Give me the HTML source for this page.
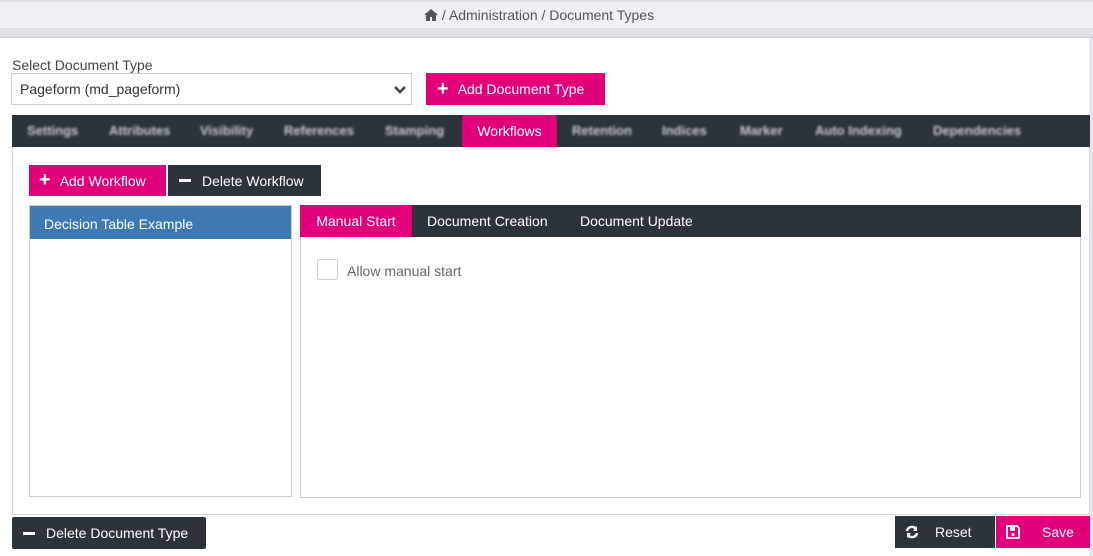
<!DOCTYPE html>
<html><head><style>
*{box-sizing:border-box;margin:0;padding:0}
body{width:1093px;height:556px;background:#fff;font-family:"Liberation Sans",sans-serif;font-size:14px;color:#333;position:relative;overflow:hidden}
.a{position:absolute}
.btn{position:absolute;color:#fff;font-size:14px;display:flex;align-items:center;white-space:nowrap}
.pink{background:#e2007a}
.dark{background:#2c333b}
.tabs span{display:inline-block;position:absolute;top:0;height:32px;line-height:32px;color:#c9ccd0;filter:blur(1.2px);font-size:13px;font-weight:bold}
</style></head><body>
<div class="a" style="left:0;top:0;width:1093px;height:28px;background:#eef1f5;border-top:2px solid #dcdfe3"></div>
<div class="a" style="left:0;top:28px;width:1093px;height:10px;background:#dde2e9;border-bottom:1px solid #c8ced6"></div>
<div class="a" style="left:424px;top:7px;font-size:14px;color:#555">
<svg width="14" height="12" viewBox="0 0 14 12" style="vertical-align:-1px"><path d="M7 0L0 6h2v6h4V8h2v4h4V6h2z" fill="#555"/></svg> / Administration / Document Types</div>
<div class="a" style="left:1089px;top:38px;width:4px;height:518px;background:#e3e6ec"></div>
<div class="a" style="left:12px;top:57px;font-size:14px;color:#444">Select Document Type</div>
<div class="a" style="left:11px;top:73px;width:401px;height:32px;border:1px solid #ccc;padding:7px 8px;color:#333">Pageform (md_pageform)
<svg class="a" style="right:4px;top:11px" width="14" height="10" viewBox="0 0 14 10"><path d="M2 2l5 5 5-5" stroke="#444" stroke-width="2.6" fill="none"/></svg></div>
<div class="btn pink" style="left:426px;top:73px;width:179px;height:32px;padding-left:11px"><b style="font-size:20px;margin-right:9px">+</b>Add Document Type</div>
<div class="a dark tabs" style="left:12px;top:115px;width:1078px;height:32px">
<span style="left:15px">Settings</span><span style="left:97px">Attributes</span><span style="left:188px">Visibility</span><span style="left:272px">References</span><span style="left:373px">Stamping</span>
<span style="left:450px;width:95px;background:#e2007a;color:#fff;filter:none;font-weight:normal;font-size:14px;text-align:center">Workflows</span>
<span style="left:560px">Retention</span><span style="left:650px">Indices</span><span style="left:728px">Marker</span><span style="left:803px">Auto Indexing</span><span style="left:921px">Dependencies</span></div>
<div class="a" style="left:12px;top:147px;width:1078px;height:368px;border:1px solid #d5d8dd;border-top:none"></div>
<div class="btn pink" style="left:29px;top:165px;width:137px;height:31px;padding-left:10px"><b style="font-size:20px;margin-right:9px">+</b>Add Workflow</div>
<div class="btn dark" style="left:168px;top:165px;width:153px;height:31px;padding-left:11px"><span style="display:inline-block;width:12px;height:3px;background:#fff;margin-right:11px"></span>Delete Workflow</div>
<div class="a" style="left:29px;top:205px;width:263px;height:292px;border:1px solid #ccc"></div>
<div class="a" style="left:30px;top:206px;width:261px;height:33px;background:#3e79b1;color:#fff;padding:10px 14px;font-size:14px">Decision Table Example</div>
<div class="a" style="left:300px;top:205px;width:781px;height:293px;border:1px solid #ccc"></div>
<div class="a dark" style="left:300px;top:205px;width:781px;height:32px;color:#fff">
<div class="a pink" style="left:0;top:0;width:112px;height:32px;line-height:32px;text-align:center">Manual Start</div>
<div class="a" style="left:127px;top:0;line-height:32px">Document Creation</div>
<div class="a" style="left:280px;top:0;line-height:32px">Document Update</div></div>
<div class="a" style="left:317px;top:259px;width:21px;height:21px;border:1px solid #ccc;border-radius:2px"></div>
<div class="a" style="left:347px;top:263px;color:#666">Allow manual start</div>
<div class="btn dark" style="left:12px;top:517px;width:194px;height:32px;padding-left:11px;border-radius:2px"><span style="display:inline-block;width:12px;height:3px;background:#fff;margin-right:11px"></span>Delete Document Type</div>
<div class="btn dark" style="left:895px;top:516px;width:100px;height:32px;padding-left:10px">
<svg width="14" height="14" viewBox="0 0 14 14" style="margin-right:16px"><path d="M2 6a5 5 0 0 1 9-2M12 8a5 5 0 0 1-9 2" stroke="#fff" stroke-width="2.4" fill="none"/><path d="M12 1v5H8zM2 13V8h4z" fill="#fff"/></svg>Reset</div>
<div class="btn pink" style="left:996px;top:516px;width:94px;height:32px;padding-left:10px">
<svg width="14" height="14" viewBox="0 0 14 14" style="margin-right:22px"><path d="M1 1h10l2 2v10H1z" stroke="#fff" stroke-width="1.8" fill="none"/><rect x="4" y="2" width="5" height="4" fill="#fff"/><circle cx="7" cy="9.5" r="1.6" fill="#fff"/></svg>Save</div>
</body></html>
